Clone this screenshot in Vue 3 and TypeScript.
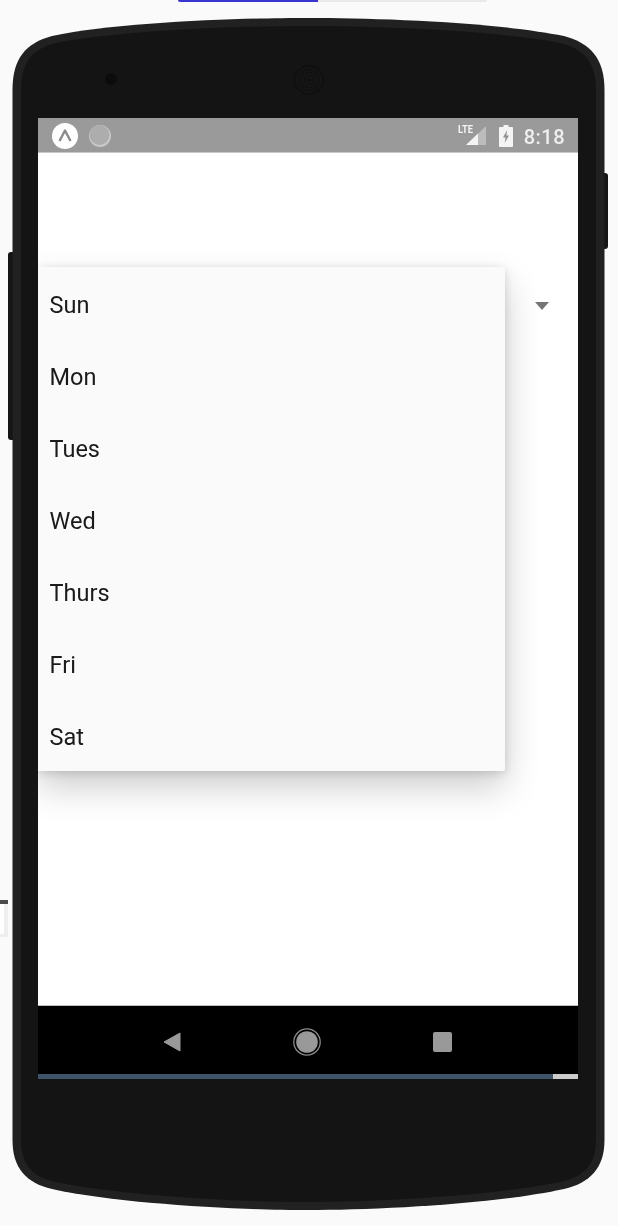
<script setup lang="ts">
const days: string[] = ['Sun', 'Mon', 'Tues', 'Wed', 'Thurs', 'Fri', 'Sat']
const speakerDots: { x: number; y: number }[] = []
for (let r = 3; r <= 12; r += 3) {
  const n = r * 3
  for (let i = 0; i < n; i++) {
    const a = (i / n) * Math.PI * 2
    speakerDots.push({ x: 15 + r * Math.cos(a), y: 15 + r * Math.sin(a) })
  }
}
</script>

<template>
  <div class="page">
    <div class="progress"><div class="progress-fill"></div></div>

    <div class="edge-fragment"><div class="edge-box"></div></div>

    <div class="button-left"></div>
    <div class="button-right"></div>

    <svg class="shell" width="618" height="1226" viewBox="0 0 618 1226">
      <path
        fill="#212121"
        d="M12.5 90 C12.5 58 26 43 52 36 C120 22 240 18 308 18 C376 18 496 22 564 36 C590 43 604.5 58 604.5 90 L604.5 1140 C604.5 1168 590 1183 564 1189 C496 1204 376 1210 308 1210 C240 1210 120 1204 52 1189 C26 1183 12.5 1168 12.5 1140 Z"
      />
      <path
        fill="#141414"
        d="M21 90 C21 62 32 49 56 43 C124 30 240 26 308 26 C376 26 492 30 560 43 C584 49 596 62 596 90 L596 1140 C596 1164 584 1177 560 1182 C492 1196 376 1202 308 1202 C240 1202 124 1196 56 1182 C32 1177 21 1164 21 1140 Z"
      />
      <circle cx="111" cy="79" r="6" fill="#0c0c0c" />
      <g transform="translate(294 65)">
        <circle cx="15" cy="15" r="15" fill="#101010" />
        <circle v-for="(d, i) in speakerDots" :key="i" :cx="d.x" :cy="d.y" r="0.8" fill="#1c1c1c" />
      </g>
    </svg>

    <div class="screen">
      <div class="status-bar">
        <div class="status-left">
          <svg class="expo" width="28" height="28" viewBox="0 0 28 28">
            <circle cx="14" cy="14" r="13" fill="#fff" />
            <path d="M8.5 19 L14 8.5 L19.5 19" fill="none" stroke="#8a8a8a" stroke-width="2.4" stroke-linejoin="round" />
          </svg>
          <svg class="dot" width="24" height="24" viewBox="0 0 24 24">
            <circle cx="12" cy="12" r="11" fill="#c9c9c9" />
            <circle cx="11.5" cy="11" r="10" fill="#adadad" />
          </svg>
        </div>
        <div class="status-right">
          <svg class="signal" width="29" height="23" viewBox="0 0 29 23">
            <text x="0" y="9" class="lte" textLength="15" lengthAdjust="spacingAndGlyphs">LTE</text>
            <path d="M8 21 L28 2 L28 21 Z" fill="#bcbcbc" />
            <path d="M8 21 L20 9.6 L20 21 Z" fill="#f4f4f4" />
          </svg>
          <svg class="battery" width="14" height="22" viewBox="0 0 14 22">
            <path d="M4.5 0 H9.5 V2 H13 Q14 2 14 3 V21 Q14 22 13 22 H1 Q0 22 0 21 V3 Q0 2 1 2 H4.5 Z" fill="#f4f4f4" />
            <path d="M8.2 5 L4 12.5 H6.6 L5.6 18 L10 10.5 H7.4 Z" fill="#8f8f8f" />
          </svg>
          <span class="time">8:18</span>
        </div>
      </div>

      <div class="content">
        <div class="picker-row">
          <ul class="menu">
            <li v-for="day in days" :key="day" class="menu-item">{{ day }}</li>
          </ul>
          <div class="arrow"></div>
        </div>
      </div>

      <div class="nav-bar">
        <div class="nav-icons">
          <svg width="18" height="20" viewBox="0 0 18 20">
            <path d="M17 1 V19 L1 10 Z" fill="#999" stroke="#999" stroke-width="1" stroke-linejoin="round" />
          </svg>
          <svg width="28" height="28" viewBox="0 0 28 28">
            <circle cx="14" cy="14" r="13.2" fill="none" stroke="#8c8c8c" stroke-width="1.3" />
            <circle cx="14" cy="14" r="10.8" fill="#999" />
          </svg>
          <div class="nav-square"></div>
        </div>
      </div>
      <div class="load-bar"><div class="load-fill"></div></div>
    </div>
  </div>
</template>

<style>
html,
body {
  margin: 0;
  background: #fafafa;
}
</style>

<style scoped>
.page {
  position: relative;
  width: 618px;
  height: 1226px;
  overflow: hidden;
  background: #fafafa;
  font-family: Roboto, 'Liberation Sans', sans-serif;
}

.progress {
  width: 309px;
  height: 2px;
  margin-left: 178px;
  background: #e9e9e9;
  border-radius: 0 0 4px 4px;
  overflow: hidden;
}

.progress-fill {
  width: 140px;
  height: 100%;
  background: #3a35d0;
}

.edge-fragment {
  position: absolute;
  left: 0;
  top: 900px;
  width: 8px;
  height: 37px;
  border-top: 4px solid #4a4a4a;
  box-sizing: border-box;
  background: #eeeeee;
}

.edge-box {
  width: 4px;
  height: 30px;
  background: #fff;
}

.button-left {
  position: absolute;
  left: 8px;
  top: 252px;
  width: 8px;
  height: 188px;
  background: #151515;
  border-radius: 3px 0 0 3px;
}

.button-right {
  position: absolute;
  left: 601px;
  top: 173px;
  width: 7px;
  height: 76px;
  background: #151515;
  border-radius: 0 3px 3px 0;
}

.shell {
  position: absolute;
  left: 0;
  top: 0;
  filter: blur(0.5px);
}

.screen {
  position: relative;
  display: flex;
  flex-direction: column;
  width: 540px;
  height: 961px;
  margin: 116px 0 0 38px;
  overflow: hidden;
}

.status-bar {
  display: flex;
  justify-content: space-between;
  align-items: center;
  flex: none;
  height: 35px;
  box-sizing: border-box;
  padding: 0 13px 0 13px;
  background: #9a9a9a;
  border-bottom: 1px solid #c8c8c8;
  filter: blur(0.4px);
}

.status-left {
  display: flex;
  align-items: center;
  gap: 9px;
}

.expo {
  margin-top: 1px;
}

.dot {
  margin-top: 1px;
}

.status-right {
  display: flex;
  align-items: center;
}

.signal {
  margin-right: 12px;
  margin-top: 1px;
}

.lte {
  font-family: Roboto, 'Liberation Sans', sans-serif;
  font-size: 10px;
  font-weight: 700;
  fill: #f4f4f4;
}

.battery {
  margin-right: 11px;
  margin-top: 1px;
}

.time {
  margin-top: 3px;
  font-size: 20px;
  font-weight: 500;
  line-height: 24px;
  letter-spacing: 0.5px;
  color: #efefef;
}

.content {
  flex: 1;
  min-height: 0;
  background: #fff;
  border-bottom: 1px solid #bdbdbd;
}

.picker-row {
  display: flex;
  justify-content: space-between;
  align-items: flex-start;
  padding-top: 114px;
}

.menu {
  width: 467px;
  margin: 0;
  padding: 0;
  list-style: none;
  background: #fafafa;
  border-radius: 0 2px 2px 0;
  box-shadow:
    0 16px 36px rgba(0, 0, 0, 0.2),
    0 2px 10px rgba(0, 0, 0, 0.14);
}

.menu-item {
  display: flex;
  align-items: center;
  height: 72px;
  padding-left: 11.5px;
  padding-top: 4px;
  box-sizing: border-box;
  font-size: 23.5px;
  color: #1a1a1a;
  filter: blur(0.3px);
}

.arrow {
  width: 0;
  height: 0;
  margin: 35px 29px 0 0;
  border-left: 7px solid transparent;
  border-right: 7px solid transparent;
  border-top: 8px solid #757575;
}

.nav-bar {
  display: flex;
  justify-content: center;
  flex: none;
  height: 68px;
  background: #000;
}

.nav-icons {
  display: flex;
  align-items: center;
  width: 289px;
  justify-content: space-between;
  margin-right: 1px;
  height: 72px;
}

.nav-square {
  width: 19px;
  height: 20px;
  background: #999;
  border-radius: 2px;
}

.load-bar {
  flex: none;
  height: 5px;
  background: #cccccc;
}

.load-fill {
  width: 515px;
  height: 100%;
  background: #3d5369;
}
</style>
